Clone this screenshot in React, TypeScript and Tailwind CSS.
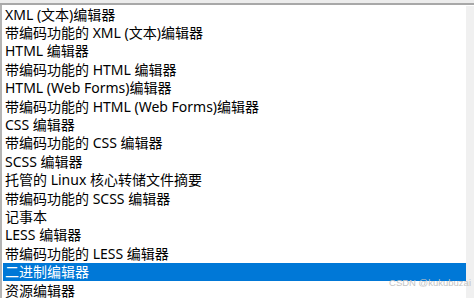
const items = [
  "XML (文本)编辑器",
  "带编码功能的 XML (文本)编辑器",
  "HTML 编辑器",
  "带编码功能的 HTML 编辑器",
  "HTML (Web Forms)编辑器",
  "带编码功能的 HTML (Web Forms)编辑器",
  "CSS 编辑器",
  "带编码功能的 CSS 编辑器",
  "SCSS 编辑器",
  "托管的 Linux 核心转储文件摘要",
  "带编码功能的 SCSS 编辑器",
  "记事本",
  "LESS 编辑器",
  "带编码功能的 LESS 编辑器",
  "二进制编辑器",
  "资源编辑器",
];

const selected = 14;

export default function App() {
  return (
    <div className="relative flex h-[298px] w-[474px] flex-col overflow-hidden bg-white font-['Noto_Sans','Noto_Sans_CJK_SC',sans-serif] text-[14px] text-black">
      {/* top edge */}
      <div className="h-[3px] shrink-0 bg-[#ececec]" />
      <div className="h-[2px] shrink-0 bg-[#a8a8a8]" />

      <div className="flex min-h-0 flex-1 border-l-2 border-[#b4b4b4]">
        <ul className="flex-1 pl-[1px] pt-[0.5px]">
          {items.map((label, i) => (
            <li
              key={label}
              className={`flex h-[18.4px] items-center whitespace-nowrap pl-[2px] leading-none ${
                i === selected ? "bg-[#0078d7] text-white" : ""
              }`}
            >
              {label}
            </li>
          ))}
        </ul>
        {/* scrollbar track */}
        <div className="mt-[1px] w-[8px] shrink-0 bg-[#f0f0f0]" />
      </div>

      <div className="absolute bottom-[8px] right-[3px] font-['Liberation_Sans',sans-serif] text-[9.5px] text-[#c4c4c4]">
        CSDN @kukubuzai
      </div>
    </div>
  );
}
